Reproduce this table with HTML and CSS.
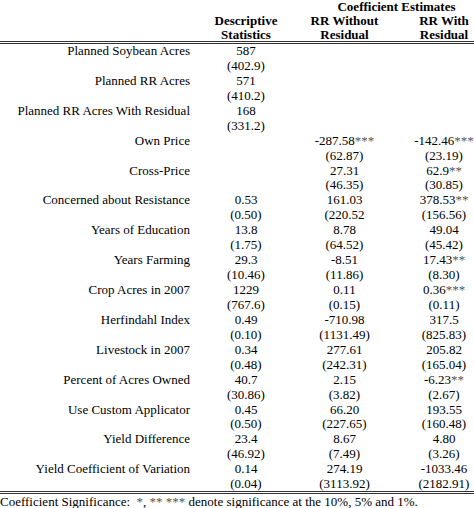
FILE: index.html
```html
<!DOCTYPE html>
<html>
<head>
<meta charset="utf-8">
<link rel="stylesheet" href="styles.css">
</head>
<body>
<div class="table">
  <div class="grid head">
    <div class="lab"></div>
    <div></div>
    <div class="span2">Coefficient Estimates</div>
    <div class="lab"></div>
    <div>Descriptive<br>Statistics</div>
    <div>RR Without<br>Residual</div>
    <div>RR With<br>Residual</div>
  </div>
  <div class="rule"></div>
  <div class="grid body">
    <div class="lab">Planned Soybean Acres</div><div>587<br>(402.9)</div><div></div><div></div>
    <div class="lab">Planned RR Acres</div><div>571<br>(410.2)</div><div></div><div></div>
    <div class="lab">Planned RR Acres With Residual</div><div>168<br>(331.2)</div><div></div><div></div>
    <div class="lab">Own Price</div><div></div><div>-287.58<span class="sig">***</span><br>(62.87)</div><div>-142.46<span class="sig">***</span><br>(23.19)</div>
    <div class="lab">Cross-Price</div><div></div><div>27.31<br>(46.35)</div><div>62.9<span class="sig">**</span><br>(30.85)</div>
    <div class="lab">Concerned about Resistance</div><div>0.53<br>(0.50)</div><div>161.03<br>(220.52</div><div>378.53<span class="sig">**</span><br>(156.56)</div>
    <div class="lab">Years of Education</div><div>13.8<br>(1.75)</div><div>8.78<br>(64.52)</div><div>49.04<br>(45.42)</div>
    <div class="lab">Years Farming</div><div>29.3<br>(10.46)</div><div>-8.51<br>(11.86)</div><div>17.43<span class="sig">**</span><br>(8.30)</div>
    <div class="lab">Crop Acres in 2007</div><div>1229<br>(767.6)</div><div>0.11<br>(0.15)</div><div>0.36<span class="sig">***</span><br>(0.11)</div>
    <div class="lab">Herfindahl Index</div><div>0.49<br>(0.10)</div><div>-710.98<br>(1131.49)</div><div>317.5<br>(825.83)</div>
    <div class="lab">Livestock in 2007</div><div>0.34<br>(0.48)</div><div>277.61<br>(242.31)</div><div>205.82<br>(165.04)</div>
    <div class="lab">Percent of Acres Owned</div><div>40.7<br>(30.86)</div><div>2.15<br>(3.82)</div><div>-6.23<span class="sig">**</span><br>(2.67)</div>
    <div class="lab">Use Custom Applicator</div><div>0.45<br>(0.50)</div><div>66.20<br>(227.65)</div><div>193.55<br>(160.48)</div>
    <div class="lab">Yield Difference</div><div>23.4<br>(46.92)</div><div>8.67<br>(7.49)</div><div>4.80<br>(3.26)</div>
    <div class="lab">Yield Coefficient of Variation</div><div>0.14<br>(0.04)</div><div>274.19<br>(3113.92)</div><div>-1033.46<br>(2182.91)</div>
  </div>
  <div class="rule"></div>
  <p class="note">Coefficient Significance:&nbsp; <span class="sig">*</span>, <span class="sig">**</span> <span class="sig">***</span> denote significance at the 10%, 5% and 1%.</p>
</div>
</body>
</html>
```
FILE: styles.css
```css
html, body {
  margin: 0;
  padding: 0;
  overflow: hidden;
  background: #fff;
}
body {
  font-family: "Liberation Serif", "Times New Roman", serif;
  font-size: 13px;
  line-height: 14.93px;
  color: #000;
}
.table {
  width: 496px;
}
.grid {
  display: grid;
  grid-template-columns: 195px 102px 95px 104px;
}
.grid > div {
  text-align: center;
  white-space: nowrap;
}
.grid > .lab {
  text-align: right;
  padding-right: 5px;
}
.head {
  font-weight: bold;
  line-height: 14px;
}
.span2 {
  grid-column: span 2;
}
.rule {
  border-top: 3px double #333;
  margin-top: -1.5px;
}
.body {
  padding-top: 0.5px;
}
.sig {
  color: #555;
}
.note {
  margin: 0;
  line-height: 15px;
  white-space: nowrap;
}
```
